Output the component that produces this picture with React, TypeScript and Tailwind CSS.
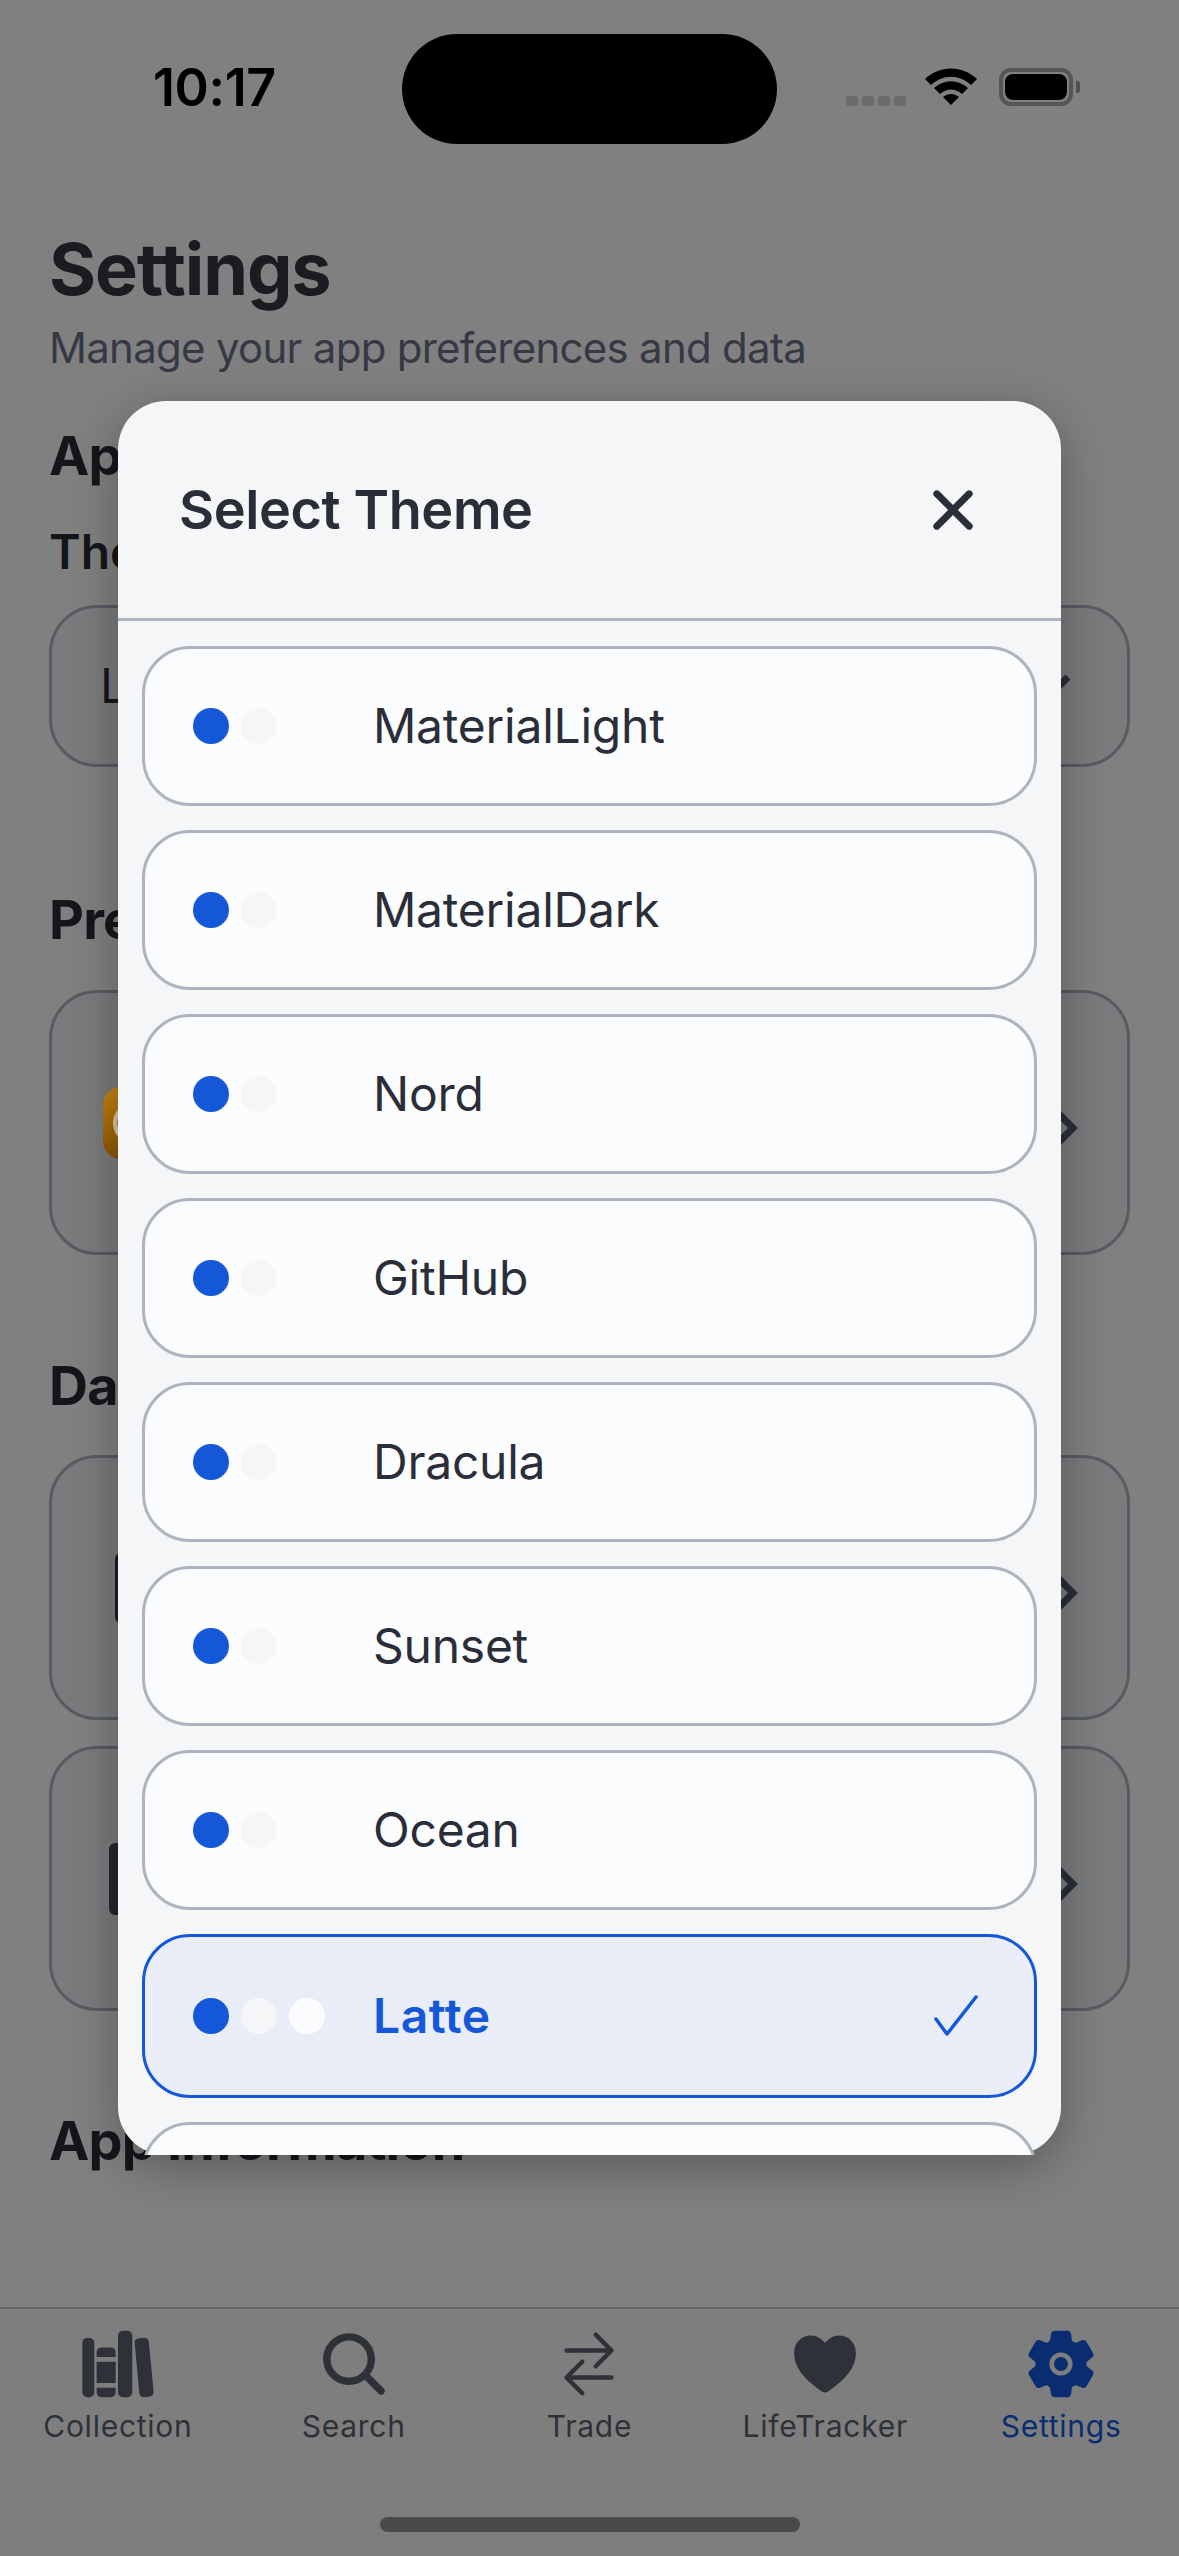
import React from "react";
import { IoLibrary, IoSearch, IoSwapHorizontalOutline, IoHeart, IoSettings, IoClose } from "react-icons/io5";

const themes = ["MaterialLight", "MaterialDark", "Nord", "GitHub", "Dracula", "Sunset", "Ocean"];

function Row({ name }: { name: string }) {
  return (
    <div className="flex h-[160px] shrink-0 items-center rounded-[48px] border-[3px] border-[#aeb3be] bg-[#fbfcfe] pl-[48px]">
      <div className="flex w-[180px] gap-[12px]">
        <span className="h-[36px] w-[36px] rounded-full bg-[#1557d9]" />
        <span className="h-[36px] w-[36px] rounded-full bg-[#f5f6f8]" />
      </div>
      <span className="text-[48px] font-normal tracking-[-0.25px] text-[#2b2e38]">{name}</span>
    </div>
  );
}

function Card({ mt, icon }: { mt: string; icon: React.ReactNode }) {
  return (
    <div className={`flex h-[265px] items-center justify-between rounded-[48px] border-[3px] border-[#595b63] bg-[#7a7b7d] pl-[51px] pr-[48px] ${mt}`}>
      {icon}
      <svg className="mt-[11px]" width="30" height="48" viewBox="0 0 30 48" fill="none" stroke="#2b2e38" strokeWidth="7" strokeLinejoin="miter">
        <path d="M6 6 L24 24 L6 42" />
      </svg>
    </div>
  );
}

function Tab({ label, icon, active }: { label: string; icon: React.ReactNode; active?: boolean }) {
  return (
    <div className={`flex flex-col items-center ${active ? "text-[#092d70]" : "text-[#2e3138]"}`}>
      <div className="flex h-[72px] items-center justify-center">{icon}</div>
      <span className="mt-[6px] text-[30px] font-normal leading-[40px] tracking-[0.75px]">{label}</span>
    </div>
  );
}

export default function App() {
  return (
    <div className="relative flex h-[2556px] w-[1179px] flex-col overflow-hidden bg-[#808080] font-['Inter',sans-serif]">
      <div className="flex h-[174px] shrink-0 items-start">
        <span className="ml-[153px] mt-[58px] w-[122px] text-[52px] font-semibold leading-[60px] tracking-[-0.4px] text-black">10:17</span>
        <div className="ml-[127px] mt-[34px] h-[110px] w-[375px] rounded-[55px] bg-black" />
        <div className="ml-[69px] mt-[96px] flex gap-[4px]">
          {[0, 1, 2, 3].map((i) => (
            <span key={i} className="h-[10px] w-[12px] rounded-[3px] bg-[#6b6b6b]" />
          ))}
        </div>
        <svg className="ml-[19px] mt-[68px]" width="52" height="38" viewBox="0 0 52 38">
          <path d="M0 11 C15 -3 37 -3 52 11 L46 17 C34 6 18 6 6 17Z M9 20 C19 11 33 11 43 20 L37 26 C30 20 22 20 15 26Z M18 29 C23 25 29 25 34 29 L26 37Z" fill="#000" />
        </svg>
        <div className="ml-[22px] mt-[68px] flex items-center">
          <div className="flex h-[38px] w-[74px] items-center justify-center rounded-[12px] border-[4px] border-[#565656]">
            <div className="h-[26px] w-[62px] rounded-[8px] bg-black" />
          </div>
          <div className="ml-[3px] h-[12px] w-[4px] rounded-r-[3px] bg-[#4f4f4f]" />
        </div>
      </div>

      <main className="min-h-0 flex-1 px-[49px]">
        <h1 className="mt-[50px] text-[72px] font-bold leading-[90px] tracking-[-1.1px] text-[#1b1c22]">Settings</h1>
        <p className="mt-[6px] text-[42px] leading-[56px] tracking-[-0.72px] text-[#363944]">Manage your app preferences and data</p>
        <h2 className="mt-[46px] text-[54px] font-bold leading-[68px] tracking-[-0.8px] text-[#15161b]">Appearance</h2>
        <p className="mt-[32px] text-[48px] font-semibold leading-[60px] text-[#15161b]">Theme</p>
        <div className="mt-[23px] flex h-[162px] items-center justify-between rounded-[48px] border-[3px] border-[#595b63] bg-[#7a7b7d] pl-[48px] pr-[53px]">
          <span className="text-[48px] text-[#15161b]">Latte</span>
          <svg width="48" height="30" viewBox="0 0 48 30" fill="none" stroke="#2b2e38" strokeWidth="7">
            <path d="M6 6 L24 24 L42 6" />
          </svg>
        </div>
        <h2 className="mt-[119px] text-[54px] font-bold leading-[68px] tracking-[-0.8px] text-[#15161b]">Preferences</h2>
        <div className="mt-[36px]">
          <Card
            mt=""
            icon={
              <svg width="72" height="72" viewBox="0 0 72 72">
                <defs>
                  <linearGradient id="coin" x1="0" y1="0" x2="0" y2="1">
                    <stop offset="0" stopColor="#c8860f" />
                    <stop offset="1" stopColor="#8a5506" />
                  </linearGradient>
                </defs>
                <rect width="72" height="72" rx="18" fill="url(#coin)" />
                <path d="M16 24 Q8 36 16 48" fill="none" stroke="#d9c9a8" strokeWidth="4" strokeLinecap="round" />
              </svg>
            }
          />
        </div>
        <h2 className="mt-[97px] text-[54px] font-bold leading-[68px] tracking-[-0.8px] text-[#15161b]">Data</h2>
        <div className="mt-[35px]">
          <Card mt="" icon={<div className="ml-[12px] h-[70px] w-[60px] rounded-[6px] bg-[#1e1f24]" />} />
          <Card mt="mt-[26px]" icon={<div className="ml-[6px] h-[72px] w-[66px] rounded-[6px] bg-[#26272c]" />} />
        </div>
        <h2 className="mt-[96px] text-[54px] font-bold leading-[68px] tracking-[-0.8px] text-[#15161b]">App Information</h2>
      </main>

      <nav className="grid h-[249px] shrink-0 grid-cols-5 border-t-[2px] border-[#646464] bg-[#7e7e7e] pt-[19px]">
        <Tab label="Collection" icon={<IoLibrary size={76} />} />
        <Tab label="Search" icon={<IoSearch size={76} />} />
        <Tab label="Trade" icon={<IoSwapHorizontalOutline size={72} />} />
        <Tab label="LifeTracker" icon={<IoHeart size={76} />} />
        <Tab label="Settings" icon={<IoSettings size={74} />} active />
      </nav>

      <div className="absolute bottom-[24px] left-[380px] h-[15px] w-[420px] rounded-full bg-[#4a4a4a]" />

      <div className="absolute left-[118px] top-[401px] flex h-[1754px] w-[943px] flex-col rounded-[48px] bg-[#f5f6f8] shadow-[0_12px_48px_rgba(0,0,0,0.3)]">
        <div className="flex h-[220px] shrink-0 items-center justify-between border-b-[3px] border-[#aeb3be] pl-[61px] pr-[71px]">
          <h3 className="text-[54px] font-semibold tracking-[-0.4px] text-[#2b2e38]">Select Theme</h3>
          <button className="flex h-[74px] w-[74px] items-center justify-center text-[#2b2e38]">
            <IoClose size={74} />
          </button>
        </div>
        <div className="flex min-h-0 flex-1 flex-col gap-[24px] overflow-hidden px-[24px] pt-[25px]">
          {themes.map((t) => (
            <Row key={t} name={t} />
          ))}
          <div className="flex h-[164px] shrink-0 items-center rounded-[48px] border-[3px] border-[#1557d9] bg-[#e9edf7] pl-[48px] pr-[56px]">
            <div className="flex w-[180px] gap-[12px]">
              <span className="h-[36px] w-[36px] rounded-full bg-[#1557d9]" />
              <span className="h-[36px] w-[36px] rounded-full bg-[#f5f6f8]" />
              <span className="h-[36px] w-[36px] rounded-full bg-[#fbfcfe]" />
            </div>
            <span className="flex-1 text-[48px] font-semibold tracking-[0.5px] text-[#1557d9]">Latte</span>
            <svg width="44" height="42" viewBox="0 0 44 42" fill="none" stroke="#1557d9" strokeWidth="3.5" strokeLinecap="round" strokeLinejoin="round">
              <path d="M2 24 L13 39 L42 2" />
            </svg>
          </div>
          <div className="h-[160px] shrink-0 rounded-[48px] border-[3px] border-[#aeb3be] bg-[#fbfcfe]" />
        </div>
      </div>
    </div>
  );
}
